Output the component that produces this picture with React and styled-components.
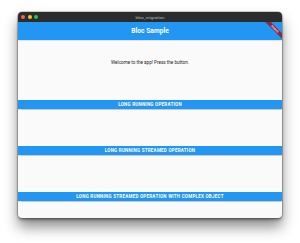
import styled, { createGlobalStyle } from "styled-components"

const GlobalStyle = createGlobalStyle`
  html, body {
    margin: 0;
    padding: 0;
    background: #ffffff;
  }
  body {
    font-family: Roboto, "Liberation Sans", sans-serif;
  }
`

const operations = [
  "Long running operation",
  "Long running streamed operation",
  "Long running streamed operation with complex object",
]

export default function App() {
  return (
    <>
      <GlobalStyle />
      <Page>
        <Window>
          <TitleBar>
            <Lights>
              <Light $color="#fe5f57" />
              <Light $color="#febc2e" />
              <Light $color="#28c840" />
            </Lights>
            <WindowTitle>bloc_migration</WindowTitle>
          </TitleBar>
          <AppBar>
            <AppTitle>Bloc Sample</AppTitle>
            <DebugBanner>
              <span>DEBUG</span>
            </DebugBanner>
          </AppBar>
          <Body>
            <Welcome>Welcome to the app! Press the button.</Welcome>
            {operations.map((label) => (
              <OpButton key={label}>{label}</OpButton>
            ))}
          </Body>
        </Window>
      </Page>
    </>
  )
}

const Page = styled.div`
  width: 300px;
  height: 243px;
  box-sizing: border-box;
  padding: 12px 18px 0;
  overflow: hidden;
`

const Window = styled.div`
  width: 264px;
  height: 206px;
  display: flex;
  flex-direction: column;
  border-radius: 4px;
  overflow: hidden;
  background: #fafafa;
  box-shadow: 0 0 0 0.5px rgba(0, 0, 0, 0.35), 0 2px 3px rgba(0, 0, 0, 0.35),
    0 9px 14px rgba(0, 0, 0, 0.45);
`

const TitleBar = styled.div`
  height: 10px;
  flex: none;
  position: relative;
  display: flex;
  align-items: center;
  justify-content: center;
  background: #2d2c2d;
`

const Lights = styled.div`
  position: absolute;
  left: 3px;
  top: 3px;
  display: flex;
  gap: 2.6px;
`

const Light = styled.div`
  width: 4px;
  height: 4px;
  border-radius: 50%;
  background: ${(props) => props.$color};
`

const WindowTitle = styled.div`
  font-size: 4.4px;
  color: #9d9c9d;
  font-weight: 500;
`

const AppBar = styled.div`
  height: 18px;
  flex: none;
  position: relative;
  display: flex;
  align-items: center;
  justify-content: center;
  background: #2196f3;
  box-shadow: 0 0.5px 1.5px rgba(0, 0, 0, 0.25);
  overflow: hidden;
  z-index: 1;
`

const AppTitle = styled.div`
  color: #ffffff;
  font-size: 6.6px;
  font-weight: 700;
  letter-spacing: 0.05px;
`

const DebugBanner = styled.div`
  position: absolute;
  top: 4.8px;
  right: -11px;
  width: 36px;
  height: 4px;
  transform: rotate(45deg);
  background: rgba(160, 22, 40, 0.85);
  display: flex;
  align-items: center;
  justify-content: center;

  span {
    font-size: 2.8px;
    font-weight: 900;
    color: #f2c9d0;
    letter-spacing: 0.1px;
  }
`

const Body = styled.div`
  flex: 1;
  display: flex;
  flex-direction: column;
  padding-top: 19.5px;
  gap: 37px;
`

const Welcome = styled.div`
  height: 5px;
  line-height: 5px;
  margin-bottom: -2px;
  text-align: center;
  font-size: 4.6px;
  color: #1e1e1e;
`

const OpButton = styled.div`
  height: 9.3px;
  display: flex;
  align-items: center;
  justify-content: center;
  background: #2196f3;
  color: #ffffff;
  font-size: 4.5px;
  font-weight: 700;
  letter-spacing: 0.25px;
  text-transform: uppercase;
  box-shadow: 0 0.5px 1px rgba(0, 0, 0, 0.2);
`
